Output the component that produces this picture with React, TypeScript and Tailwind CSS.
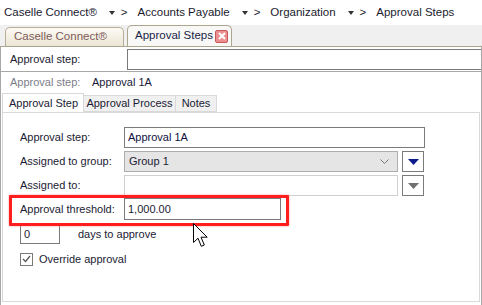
import React from 'react';

const Caret = () => (
  <svg width="6" height="4" viewBox="0 0 6 4">
    <path d="M0 0h6L3 4z" fill="#333" />
  </svg>
);

const crumbs = ['Caselle Connect®', 'Accounts Payable', 'Organization'];

const DropButton = ({ color }: { color: string }) => (
  <div className="w-[22px] h-[21px] border border-[#7a7a7a] bg-white flex items-center justify-center">
    <svg width="11" height="6" viewBox="0 0 11 6">
      <path d="M0 0h11L5.5 6z" fill={color} />
    </svg>
  </div>
);

const App: React.FC = () => {
  return (
    <div className="relative w-[482px] h-[305px] bg-white overflow-hidden text-[#1b1b33]" style={{ fontFamily: '"Liberation Sans", Arial, sans-serif' }}>
      {/* Breadcrumb */}
      <div className="h-[25px] flex items-center pl-[4px] text-[11.5px] text-[#1a1a2e]">
        {crumbs.map((c) => (
          <React.Fragment key={c}>
            <span>{c}</span>
            <span className="ml-[12px] flex items-center"><Caret /></span>
            <span className="ml-[6px] mr-[10px]">&gt;</span>
          </React.Fragment>
        ))}
        <span>Approval Steps</span>
      </div>

      {/* Window tabs */}
      <div className="h-[22px] flex items-end gap-[3px] pl-[5px] bg-[#f0f0f0] border-b border-[#aca58e]">
        <div className="w-[119px] h-[19px] rounded-t-[5px] border border-b-0 border-[#b7ae95] bg-gradient-to-b from-[#fcfaf4] to-[#ebe5d4] text-[#7d5b5b] text-[11.5px] pl-[8px] flex items-center">
          Caselle Connect®
        </div>
        <div className="w-[105px] h-[21px] rounded-t-[5px] border border-b-0 border-[#aca58e] bg-[#f8f8f6] text-[#1a2448] text-[11.5px] pl-[7px] pr-[3px] flex items-center justify-between">
          <span>Approval Steps</span>
          <span className="w-[13px] h-[13px] rounded-[2px] border border-[#c9585a] bg-[#ec8f90] flex items-center justify-center">
            <svg width="8" height="8" viewBox="0 0 8 8">
              <path d="M1 1l6 6M7 1L1 7" stroke="#fff" strokeWidth="2" />
            </svg>
          </span>
        </div>
      </div>

      {/* Main area */}
      <div className="border-l border-r border-[#a8a8a8] h-[258px]">
        <div className="h-[25px] flex items-start pt-[2px] border-b border-[#a8a8a8]">
          <span className="w-[126px] pl-[9px] text-[11px] leading-[21px]">Approval step:</span>
          <div className="flex-1 h-[21px] border-y border-l border-[#7a7a7a] bg-white" />
        </div>

        <div className="h-[20px] flex items-center text-[11px]">
          <span className="w-[91px] pl-[9px] text-[#7d7d8a]">Approval step:</span>
          <span className="text-[#1a1a3a]">Approval 1A</span>
        </div>

        {/* Inner tabs */}
        <div className="flex items-end pl-[1px] h-[20px] text-[11px]">
          <div className="w-[82px] h-[20px] bg-white border border-b-0 border-[#d9d9d9] pl-[6px] flex items-center relative top-[1px]">
            Approval Step
          </div>
          <div className="w-[92px] h-[17px] bg-[#f0f0f0] border border-l-0 border-[#d9d9d9] flex items-center justify-center">
            Approval Process
          </div>
          <div className="w-[41px] h-[17px] bg-[#f0f0f0] border border-l-0 border-[#d9d9d9] flex items-center justify-center">
            Notes
          </div>
        </div>

        <div className="relative ml-[1px] w-[478px] h-[190px] border border-[#d9d9d9] bg-white pt-[14px] pl-[17px] text-[11px]">
          <div className="flex flex-col gap-[3px]">
            <div className="flex items-center h-[21px]">
              <span className="w-[104px]">Approval step:</span>
              <div className="w-[301px] h-[21px] border border-[#7a7a7a] pl-[3px] flex items-center text-[#101040]">Approval 1A</div>
            </div>
            <div className="flex items-center h-[21px]">
              <span className="w-[104px]">Assigned to group:</span>
              <div className="w-[274px] h-[21px] border border-[#adadad] bg-[#e5e5e5] pl-[4px] pr-[8px] flex items-center justify-between">
                <span>Group 1</span>
                <svg width="9" height="5" viewBox="0 0 9 5">
                  <path d="M0.5 0.5L4.5 4.5L8.5 0.5" stroke="#777" fill="none" />
                </svg>
              </div>
              <div className="ml-[4px]"><DropButton color="#0a1a8a" /></div>
            </div>
            <div className="flex items-center h-[21px]">
              <span className="w-[104px]">Assigned to:</span>
              <div className="w-[274px] h-[21px] border border-[#d0d0d0] bg-white" />
              <div className="ml-[4px]"><DropButton color="#707070" /></div>
            </div>
          </div>

          {/* Threshold row with highlight */}
          <div className="relative flex items-center h-[22px] mt-[2px]">
            <span className="w-[104px]">Approval threshold:</span>
            <div className="w-[157px] h-[22px] border border-[#7a7a7a] pl-[3px] flex items-center">1,000.00</div>
            <div className="absolute left-[-11px] top-[-3px] w-[280px] h-[31px] border-[3px] border-[#ff1e1e] rounded-[1px] shadow-[0_0_2px_#ff8080] pointer-events-none" />
          </div>

          <div className="flex items-center h-[20px] mt-[4px]">
            <div className="w-[40px] h-[20px] border border-[#7a7a7a] pl-[3px] flex items-center">0</div>
            <span className="ml-[18px]">days to approve</span>
          </div>

          <div className="flex items-center mt-[7px]">
            <div className="w-[13px] h-[13px] border border-[#7a7a7a] bg-white flex items-center justify-center">
              <svg width="9" height="8" viewBox="0 0 9 8">
                <path d="M1 4l2.5 2.5L8 1" stroke="#555" strokeWidth="1.2" fill="none" />
              </svg>
            </div>
            <span className="ml-[6px]">Override approval</span>
          </div>

          {/* Mouse cursor */}
          <svg className="absolute left-[190px] top-[110px]" width="16" height="26" viewBox="0 0 16 26">
            <path d="M0.5 0.5V19.5L5 15.2L8.3 23.3L11.3 22L8 14.2H14.2Z" fill="#fff" stroke="#000" strokeWidth="1" strokeLinejoin="miter" />
          </svg>
        </div>
      </div>
    </div>
  );
};

export default App;
